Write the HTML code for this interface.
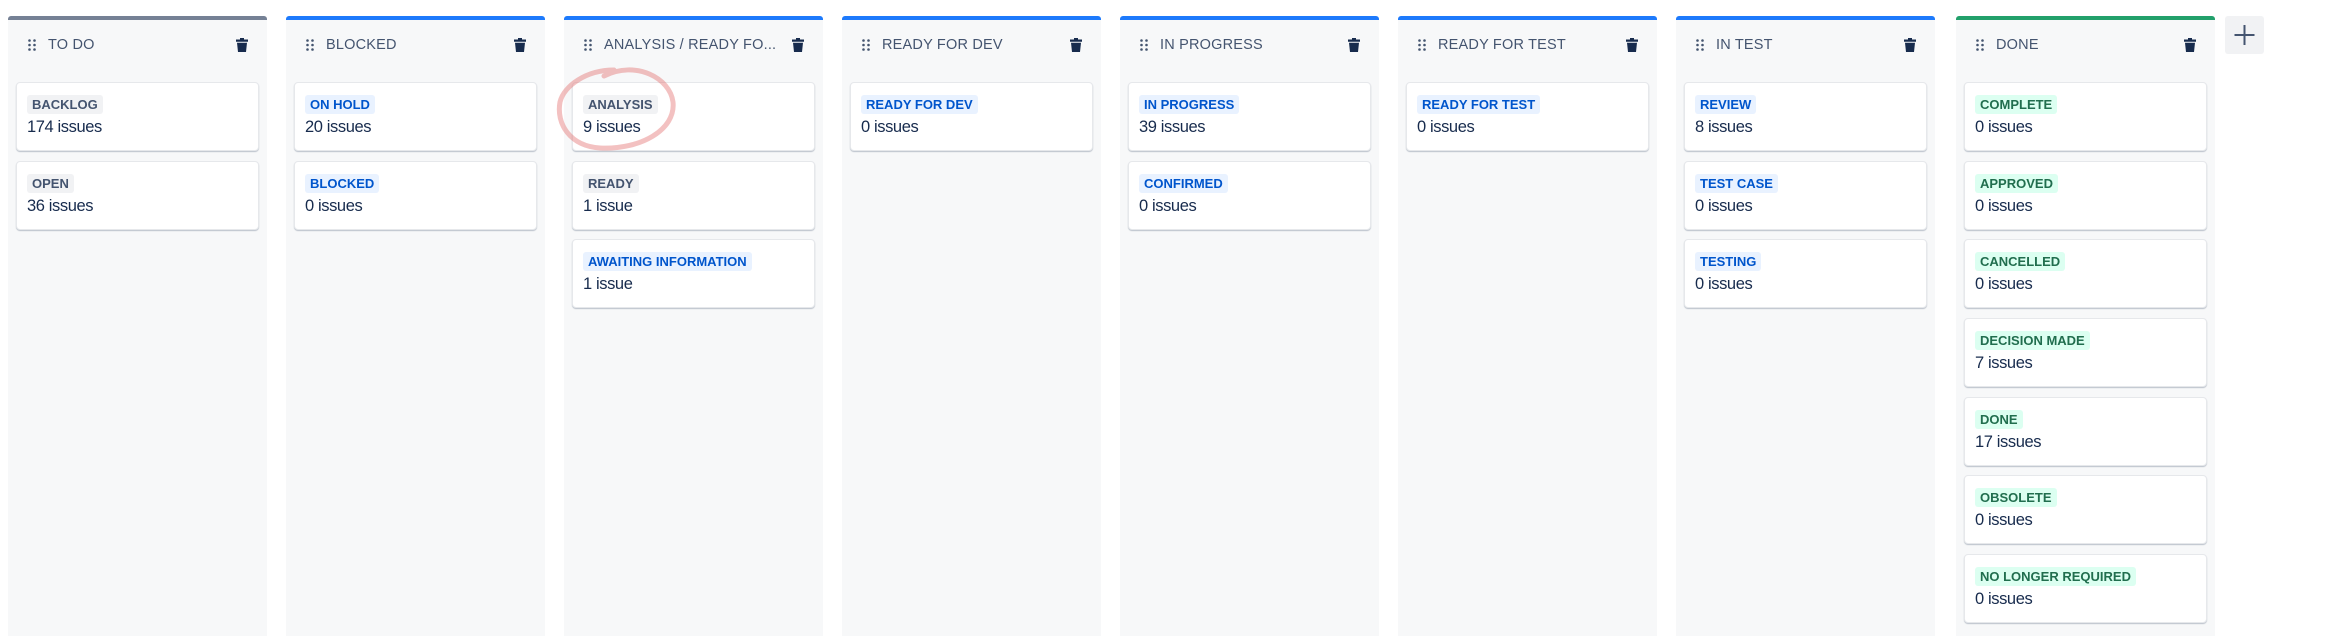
<!DOCTYPE html>
<html><head><meta charset="utf-8"><style>
*{box-sizing:border-box;margin:0;padding:0}
body{width:2332px;height:631px;background:#fff;position:relative;overflow:hidden;font-family:"Liberation Sans",sans-serif}
.col{position:absolute;top:16px;width:259px;height:620px;background:#f7f8f9;border-radius:3px 3px 0 0;border-top:4px solid #1d7afc}
.hd{position:absolute;top:0;left:0;right:0;height:58px}
.drag{position:absolute;left:20px;top:19px}
.title{position:absolute;left:40px;top:17px;font-size:14.5px;color:#44546f;letter-spacing:0.2px}
.trash{position:absolute;right:19px;top:18px}
.cards{position:absolute;top:62px;left:8px;right:8px}
.card{height:69px;margin-bottom:9.7px;background:#fff;border-radius:4px;border:1px solid #e6e8eb;box-shadow:0 1px 1px rgba(9,30,66,.25);padding:12px 10px}
.loz{display:inline-block;font-size:13px;font-weight:bold;padding:2px 5px;border-radius:3px;line-height:15px;background:#e9f2ff;color:#0055cc}
.g .loz{background:#f1f2f4;color:#44546f}
.gr .loz{background:#dcfff1;color:#216e4e}
.n{font-size:16.5px;color:#172b4d;margin-top:4px;letter-spacing:-0.4px}
.plus{position:absolute;left:2225px;top:16px;width:39px;height:38px;background:#f1f2f4;border-radius:3px}
</style></head><body>
<svg width="0" height="0" style="position:absolute"><defs>
<g id="dr"><circle cx="1.5" cy="1.5" r="1.3"/><circle cx="6.5" cy="1.5" r="1.3"/><circle cx="1.5" cy="6" r="1.3"/><circle cx="6.5" cy="6" r="1.3"/><circle cx="1.5" cy="10.5" r="1.3"/><circle cx="6.5" cy="10.5" r="1.3"/></g>
<g id="tr"><path d="M4 0h4v1.5h4v2.2H0V1.5h4z M1 4.8h10l-1 9.2H2z"/></g>
</defs></svg>

<div class="col" style="left:8px;border-top-color:#758195"><div class="hd"><svg class="drag" width="8" height="12" fill="#44546f"><use href="#dr"/></svg><div class="title">TO DO</div><svg class="trash" width="12" height="14" fill="#172b4d"><use href="#tr"/></svg></div>
<div class="cards g"><div class="card"><span class="loz">BACKLOG</span><div class="n">174 issues</div></div><div class="card"><span class="loz">OPEN</span><div class="n">36 issues</div></div></div></div>

<div class="col" style="left:286px"><div class="hd"><svg class="drag" width="8" height="12" fill="#44546f"><use href="#dr"/></svg><div class="title">BLOCKED</div><svg class="trash" width="12" height="14" fill="#172b4d"><use href="#tr"/></svg></div>
<div class="cards"><div class="card"><span class="loz">ON HOLD</span><div class="n">20 issues</div></div><div class="card"><span class="loz">BLOCKED</span><div class="n">0 issues</div></div></div></div>

<div class="col" style="left:564px"><div class="hd"><svg class="drag" width="8" height="12" fill="#44546f"><use href="#dr"/></svg><div class="title">ANALYSIS / READY FO...</div><svg class="trash" width="12" height="14" fill="#172b4d"><use href="#tr"/></svg></div>
<div class="cards"><div class="card g"><span class="loz">ANALYSIS</span><div class="n">9 issues</div></div><div class="card g"><span class="loz">READY</span><div class="n">1 issue</div></div><div class="card"><span class="loz">AWAITING INFORMATION</span><div class="n">1 issue</div></div></div></div>

<div class="col" style="left:842px"><div class="hd"><svg class="drag" width="8" height="12" fill="#44546f"><use href="#dr"/></svg><div class="title">READY FOR DEV</div><svg class="trash" width="12" height="14" fill="#172b4d"><use href="#tr"/></svg></div>
<div class="cards"><div class="card"><span class="loz">READY FOR DEV</span><div class="n">0 issues</div></div></div></div>

<div class="col" style="left:1120px"><div class="hd"><svg class="drag" width="8" height="12" fill="#44546f"><use href="#dr"/></svg><div class="title">IN PROGRESS</div><svg class="trash" width="12" height="14" fill="#172b4d"><use href="#tr"/></svg></div>
<div class="cards"><div class="card"><span class="loz">IN PROGRESS</span><div class="n">39 issues</div></div><div class="card"><span class="loz">CONFIRMED</span><div class="n">0 issues</div></div></div></div>

<div class="col" style="left:1398px"><div class="hd"><svg class="drag" width="8" height="12" fill="#44546f"><use href="#dr"/></svg><div class="title">READY FOR TEST</div><svg class="trash" width="12" height="14" fill="#172b4d"><use href="#tr"/></svg></div>
<div class="cards"><div class="card"><span class="loz">READY FOR TEST</span><div class="n">0 issues</div></div></div></div>

<div class="col" style="left:1676px"><div class="hd"><svg class="drag" width="8" height="12" fill="#44546f"><use href="#dr"/></svg><div class="title">IN TEST</div><svg class="trash" width="12" height="14" fill="#172b4d"><use href="#tr"/></svg></div>
<div class="cards"><div class="card"><span class="loz">REVIEW</span><div class="n">8 issues</div></div><div class="card"><span class="loz">TEST CASE</span><div class="n">0 issues</div></div><div class="card"><span class="loz">TESTING</span><div class="n">0 issues</div></div></div></div>

<div class="col" style="left:1956px;border-top-color:#22a06b"><div class="hd"><svg class="drag" width="8" height="12" fill="#44546f"><use href="#dr"/></svg><div class="title">DONE</div><svg class="trash" width="12" height="14" fill="#172b4d"><use href="#tr"/></svg></div>
<div class="cards gr"><div class="card"><span class="loz">COMPLETE</span><div class="n">0 issues</div></div><div class="card"><span class="loz">APPROVED</span><div class="n">0 issues</div></div><div class="card"><span class="loz">CANCELLED</span><div class="n">0 issues</div></div><div class="card"><span class="loz">DECISION MADE</span><div class="n">7 issues</div></div><div class="card"><span class="loz">DONE</span><div class="n">17 issues</div></div><div class="card"><span class="loz">OBSOLETE</span><div class="n">0 issues</div></div><div class="card"><span class="loz">NO LONGER REQUIRED</span><div class="n">0 issues</div></div></div></div>

<div class="plus"><svg width="39" height="38"><path d="M19.5 9v20M9.5 19h20" stroke="#44546f" stroke-width="2"/></svg></div>

<svg style="position:absolute;left:0;top:0" width="2332" height="631"><path d="M604 76 C636 60 670 78 673 102 C676 130 640 150 600 148 C570 146 556 124 560 102 C564 86 586 70 614 70" fill="none" stroke="rgba(225,100,100,0.4)" stroke-width="5" stroke-linecap="round"/></svg>
</body></html>
